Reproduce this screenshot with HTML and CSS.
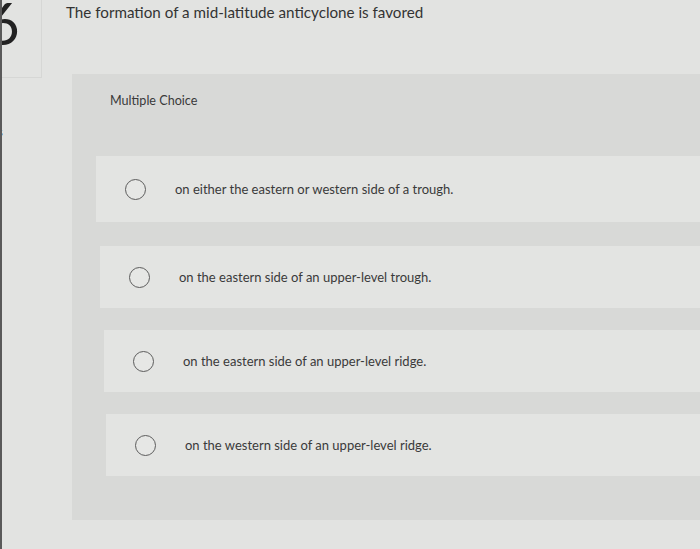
FILE: index.html
```html
<!DOCTYPE html>
<html>
<head>
<meta charset="utf-8">
<link rel="stylesheet" href="styles.css">
</head>
<body>
<div class="page">
  <aside class="side">
    <div class="qnum">6</div>
    <div class="side-s">s</div>
  </aside>
  <main class="main">
    <h1 class="question">The formation of a mid-latitude anticyclone is favored</h1>
    <section class="panel">
      <div class="label">Multiple Choice</div>
      <div class="options">
        <div class="option o1"><span class="radio"></span><span class="opt-text">on either the eastern or western side of a trough.</span></div>
        <div class="option o2"><span class="radio"></span><span class="opt-text">on the eastern side of an upper-level trough.</span></div>
        <div class="option o3"><span class="radio"></span><span class="opt-text">on the eastern side of an upper-level ridge.</span></div>
        <div class="option o4"><span class="radio"></span><span class="opt-text">on the western side of an upper-level ridge.</span></div>
      </div>
    </section>
  </main>
</div>
</body>
</html>
```
FILE: styles.css
```css
html, body {
  margin: 0;
  padding: 0;
}
body {
  width: 700px;
  height: 549px;
  overflow: hidden;
  background: #e2e3e1;
  font-family: "Lato", "Liberation Sans", sans-serif;
  color: #3a3a3a;
}
.page {
  display: flex;
  height: 549px;
}
.side {
  width: 40px;
  flex: none;
  border-left: 2px solid #5a5a5a;
  overflow: hidden;
}
.qnum {
  height: 78px;
  border-right: 1px solid #d6d7d5;
  border-bottom: 1px solid #d6d7d5;
  font-size: 58px;
  line-height: 46px;
  color: #222;
  padding-left: 0;
  text-indent: -16px;
  box-sizing: border-box;
  overflow: hidden;
}
.side-s {
  font-size: 11px;
  color: #444;
  margin-top: 47px;
  margin-left: -4px;
}
.main {
  flex: 1;
  min-width: 0;
}
.question {
  margin: 0;
  padding: 1px 0 0 24px;
  font-size: 15.2px;
  font-weight: 400;
  line-height: 22px;
  color: #333;
}
.panel {
  margin: 51px 0 0 30px;
  background: #d8d9d7;
  height: 446px;
  padding: 19px 0 0 0;
  box-sizing: border-box;
}
.label {
  margin-left: 38px;
  font-size: 12.6px;
  line-height: 16px;
  color: #3a3a3a;
}
.options {
  margin-top: 47px;
  display: flex;
  flex-direction: column;
  gap: 22px;
}
.option {
  display: flex;
  align-items: center;
  background: #e3e4e2;
  height: 62px;
}
.o1 { margin-left: 24px; height: 66px; margin-bottom: 2px; }
.o2 { margin-left: 28px; }
.o3 { margin-left: 32px; }
.o4 { margin-left: 34px; }
.radio {
  width: 21px;
  height: 21px;
  border: 1.5px solid #5c5c5c;
  border-radius: 50%;
  margin-left: 29px;
  flex: none;
  box-sizing: border-box;
  background: #e6e7e5;
}
.opt-text {
  margin-left: 29px;
  font-size: 13px;
  color: #3a3a3a;
}
```
